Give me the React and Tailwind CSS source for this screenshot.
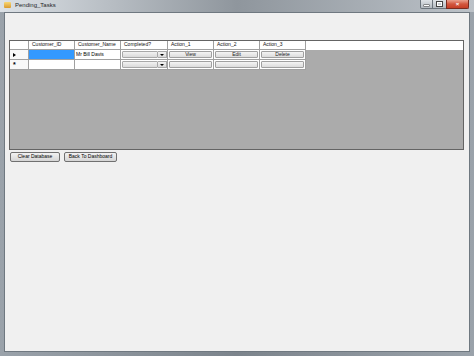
import React from "react";

const cols = ["Customer_ID", "Customer_Name", "Completed?", "Action_1", "Action_2", "Action_3"];
const widths = ["w-[46px]", "w-[46px]", "w-[47px]", "w-[46px]", "w-[46px]", "w-[46px]"];

const GridButton = ({ label }) => (
  <div className="m-[1px] flex flex-1 items-center justify-center rounded-[1px] border border-[#a0a0a0] bg-gradient-to-b from-[#f4f4f4] to-[#dcdcdc] text-[5px] leading-none text-[#222]">
    {label}
  </div>
);

const ComboCell = ({ value }) => (
  <div className="flex flex-1 items-stretch">
    <div className="m-[1px] mr-0 flex flex-1 items-center rounded-[1px] border border-[#a8a8a8] bg-gradient-to-b from-[#f2f2f2] to-[#dadada] text-[5px]">
      {value}
    </div>
    <div className="my-[1px] flex w-[9px] items-center justify-center border border-l-0 border-[#a8a8a8] bg-gradient-to-b from-[#f2f2f2] to-[#dadada]">
      <span className="block h-0 w-0 border-x-[2px] border-t-[2px] border-x-transparent border-t-black" />
    </div>
  </div>
);

const Row = ({ marker, cells }) => (
  <div className="flex h-[10px]">
    <div className="flex w-[19px] items-center border-b border-r border-[#a0a0a0] bg-[#f8f8f8] pl-[3px]">
      {marker}
    </div>
    {cells.map((c, i) => (
      <div key={i} className={`${widths[i]} flex border-b border-r border-[#a0a0a0] ${c.selected ? "bg-[#3399ff]" : "bg-white"}`}>
        {c.kind === "text" && <span className="flex items-center pl-[1px] text-[5px] text-black">{c.value}</span>}
        {c.kind === "combo" && <ComboCell value="" />}
        {c.kind === "button" && <GridButton label={c.value} />}
      </div>
    ))}
  </div>
);

export default function App() {
  const row1 = [
    { kind: "text", value: "", selected: true },
    { kind: "text", value: "Mr Bill Davis" },
    { kind: "combo" },
    { kind: "button", value: "View" },
    { kind: "button", value: "Edit" },
    { kind: "button", value: "Delete" },
  ];
  const row2 = [
    { kind: "text", value: "" },
    { kind: "text", value: "" },
    { kind: "combo" },
    { kind: "button", value: "" },
    { kind: "button", value: "" },
    { kind: "button", value: "" },
  ];

  return (
    <div className="flex h-[356px] w-[474px] flex-col overflow-hidden bg-gradient-to-r from-[#9aa2aa] via-[#7c848c] to-[#9aa2aa] font-['Liberation_Sans',Arial,sans-serif]">
      {/* title bar */}
      <div className="flex h-[12px] items-start bg-gradient-to-r from-[#dce1e6] via-[#8f969d] to-[#bcc2c8]">
        <div className="ml-[4px] mt-[2px] h-[6px] w-[7px] rounded-[1px] bg-gradient-to-b from-[#f7d774] to-[#d99a2b]" />
        <span className="ml-[4px] mt-[2px] text-[6px] leading-none text-[#1e1e1e]">Pending_Tasks</span>
        <div className="ml-auto mr-[5px] flex h-[9px]">
          <div className="flex w-[13px] items-end justify-center rounded-bl-[2px] border border-t-0 border-[#6c747c] bg-gradient-to-b from-[#dfe3e7] to-[#b4bac0] pb-[2px]">
            <span className="block h-[1px] w-[5px] bg-white shadow-[0_0_0_0.5px_#444]" />
          </div>
          <div className="flex w-[13px] items-center justify-center border-b border-[#6c747c] bg-gradient-to-b from-[#dfe3e7] to-[#b4bac0]">
            <span className="block h-[4px] w-[5px] border border-white outline outline-[0.5px] outline-[#444]" />
          </div>
          <div className="flex w-[23px] items-center justify-center rounded-br-[2px] border border-t-0 border-[#7a2b20] bg-gradient-to-b from-[#e9a08e] via-[#d2563e] to-[#c63e26] text-[6px] font-bold leading-none text-white">
            ×
          </div>
        </div>
      </div>

      {/* client area */}
      <div className="mx-[4px] mb-[4px] flex flex-1 flex-col border border-[#6f7880] bg-[#f0f0f0] px-[4px]">
        <div className="mt-[27px] flex h-[110px] w-[455px] flex-col border border-[#646464] bg-[#ababab]">
          <div className="flex h-[9px] bg-white">
            <div className="w-[19px] border-b border-r border-[#a0a0a0]" />
            {cols.map((c, i) => (
              <div key={c} className={`${widths[i]} flex items-center border-b border-r border-[#a0a0a0] pl-[3px] text-[5px] text-[#111]`}>
                {c}
              </div>
            ))}
          </div>
          <Row
            marker={<span className="block h-0 w-0 border-y-[2px] border-l-[3px] border-y-transparent border-l-black" />}
            cells={row1}
          />
          <Row marker={<span className="text-[7px] font-bold leading-none">*</span>} cells={row2} />
        </div>

        <div className="mt-[2px] flex gap-[4px] pl-[1px]">
          <div className="flex h-[10px] w-[50px] items-center justify-center rounded-[2px] border border-[#707070] bg-gradient-to-b from-[#f2f2f2] to-[#d5d5d5] text-[5px] text-black">
            Clear Database
          </div>
          <div className="flex h-[10px] w-[53px] items-center justify-center rounded-[2px] border border-[#707070] bg-gradient-to-b from-[#f2f2f2] to-[#d5d5d5] text-[5px] text-black">
            Back To Dashboard
          </div>
        </div>
      </div>
    </div>
  );
}
